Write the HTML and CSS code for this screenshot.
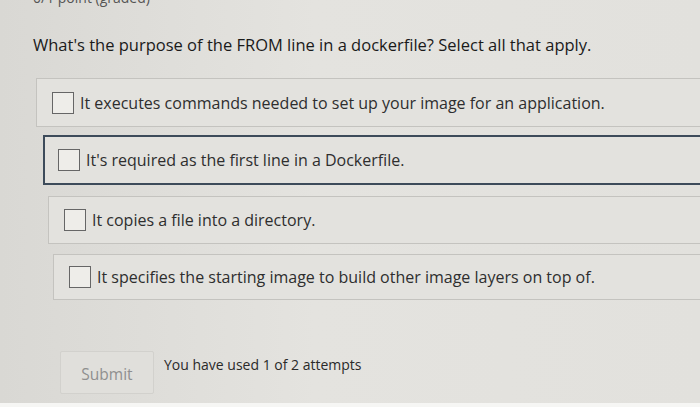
FILE: index.html
```html
<!DOCTYPE html>
<html lang="en">
  <head>
    <meta charset="UTF-8" />
    <title>Problem</title>
    <link rel="stylesheet" href="styles.css">
  </head>
  <body>
    <div class="problem">
      <div class="points">0/1 point (graded)</div>
      <p class="question">What's the purpose of the FROM line in a dockerfile? Select all that apply.</p>

      <div class="choices">
        <label class="choice">
          <span class="box"></span>
          <span class="choice-text">It executes commands needed to set up your image for an application.</span>
        </label>
        <label class="choice focused">
          <span class="box"></span>
          <span class="choice-text">It's required as the first line in a Dockerfile.</span>
        </label>
        <label class="choice">
          <span class="box"></span>
          <span class="choice-text">It copies a file into a directory.</span>
        </label>
        <label class="choice">
          <span class="box"></span>
          <span class="choice-text">It specifies the starting image to build other image layers on top of.</span>
        </label>
      </div>

      <div class="actions">
        <button class="submit" disabled>Submit</button>
        <span class="attempts">You have used 1 of 2 attempts</span>
      </div>
    </div>
    <div class="screen-edge"></div>
  </body>
</html>
```

FILE: styles.css
```css
body {
  margin: 0;
  font-family: "Open Sans", Arial, sans-serif;
  background: linear-gradient(90deg, #d9d8d4 0%, #e4e3df 45%, #e2e1dd 100%);
  color: #2a2a2a;
  height: 407px;
  overflow: hidden;
  display: flex;
  flex-direction: column;
}

.problem {
  flex: 1;
  padding-left: 33px;
}

.points {
  font-size: 14px;
  line-height: 18px;
  color: #555;
  margin-top: -11px;
  height: 18px;
}

.question {
  margin: 27px 0 0;
  font-size: 16.5px;
  line-height: 22px;
  color: #1a1a1a;
}

.choices {
  margin-top: 22px;
  display: flex;
  flex-direction: column;
  gap: 8px;
}

.choice {
  display: flex;
  align-items: center;
  height: 49px;
  box-sizing: border-box;
  border: 1px solid #c4c3bf;
  border-right: none;
  background: #e3e2de;
  padding-left: 15px;
  margin-left: 3px;
  font-size: 16px;
  color: #2e2e2e;
}

.choice:nth-child(2) {
  margin-left: 10px;
  border: 2px solid #3d4b5a;
  border-right: none;
  height: 50px;
  padding-left: 13px;
}

.choice:nth-child(3) {
  margin-left: 15px;
  margin-top: 3px;
  height: 48px;
}

.choice:nth-child(4) {
  margin-left: 20px;
  margin-top: 2px;
  height: 46px;
}

.box {
  width: 20px;
  height: 20px;
  border: 1.5px solid #666;
  background: #eeede9;
  margin-right: 6px;
  flex-shrink: 0;
}

.actions {
  display: flex;
  align-items: flex-start;
  margin-top: 51px;
  padding-left: 27px;
}

.submit {
  width: 94px;
  height: 43px;
  border: 1px solid #d2d1cd;
  background: #e0dfdb;
  color: #8f8f8f;
  font-family: inherit;
  font-size: 15.5px;
  border-radius: 2px;
  padding: 2px 0 0;
}

.attempts {
  margin-left: 10px;
  margin-top: 4px;
  font-size: 14px;
  color: #2a2a2a;
}

.screen-edge {
  height: 4px;
  background: #f6f6f4;
}
```
